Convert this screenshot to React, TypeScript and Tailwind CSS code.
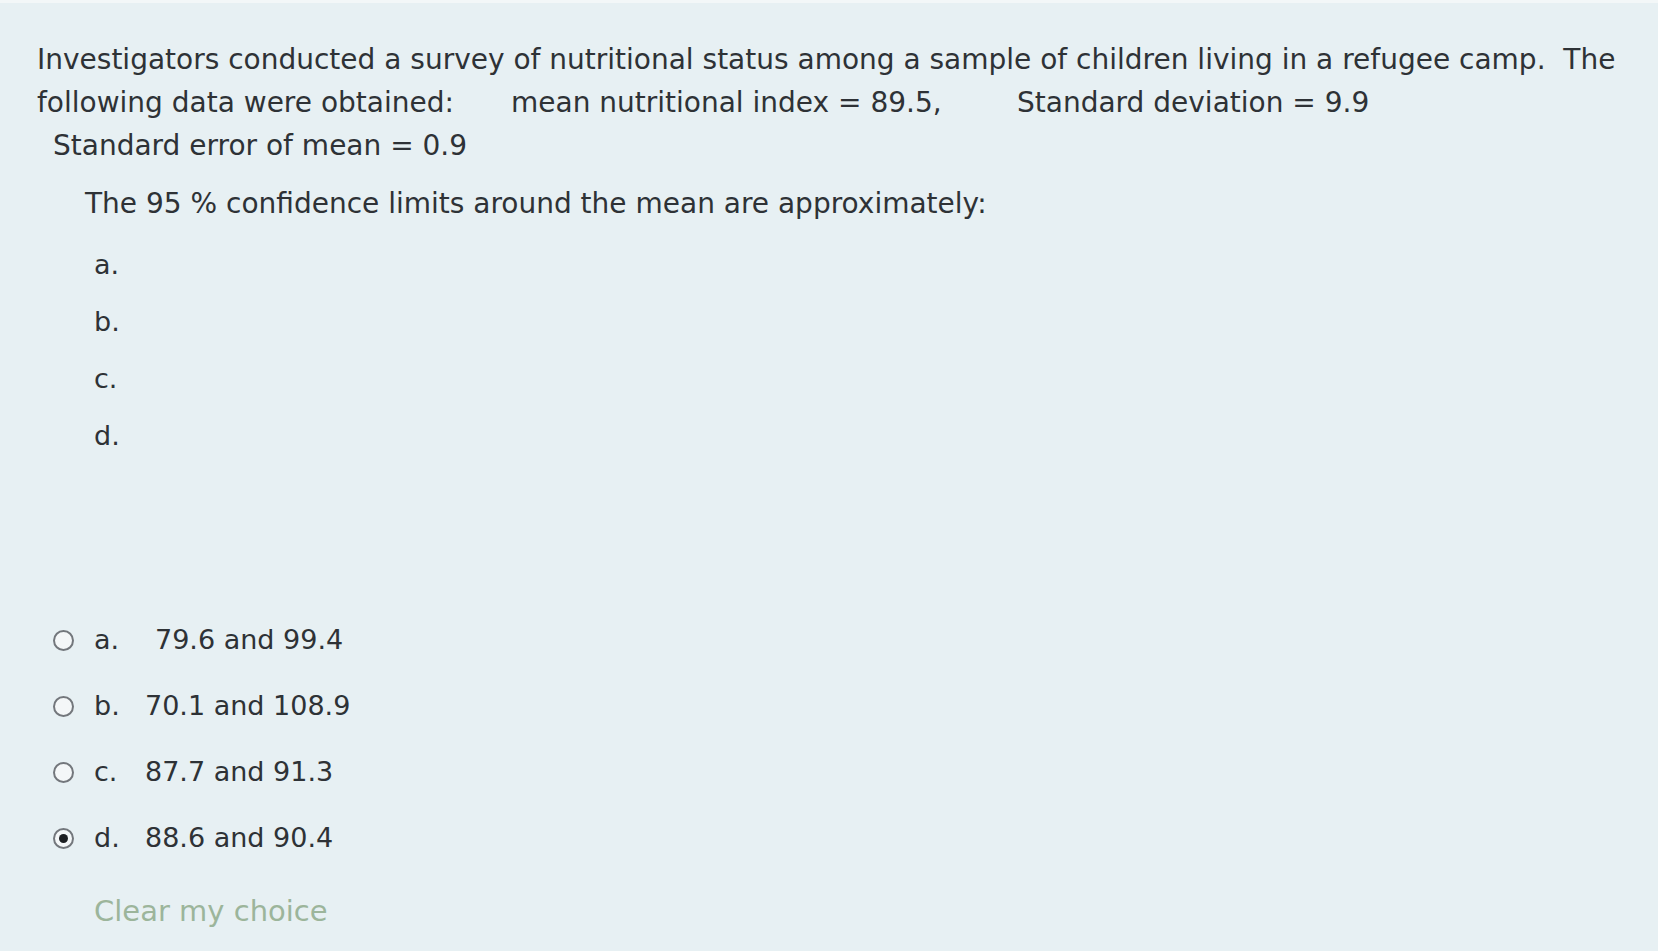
import React from 'react';

const options = [
  { letter: 'a.', text: '79.6 and 99.4', gap: 'ml-[31px]' },
  { letter: 'b.', text: '70.1 and 108.9', gap: 'ml-[21px]' },
  { letter: 'c.', text: '87.7 and 91.3', gap: 'ml-[21px]' },
  { letter: 'd.', text: '88.6 and 90.4', gap: 'ml-[21px]' },
];

const Radio = ({ checked }: { checked?: boolean }) => (
  <span className="flex h-[21px] w-[21px] items-center justify-center rounded-full border-2 border-[#73777c] bg-[#f4f7f8]">
    {checked && <span className="h-[9px] w-[9px] rounded-full bg-[#1c1f22]" />}
  </span>
);

const App: React.FC = () => {
  return (
    <div className="h-[951px] w-[1658px] overflow-hidden bg-[#e7f0f3] font-['DejaVu_Sans',sans-serif] text-[28px] text-[#2e3236] border-t-[3px] border-t-[#f3f7f8]">
      <div className="pl-[37px] pt-[35px]">
        {/* question stem */}
        <div className="leading-[43px] whitespace-pre">
          <div>Investigators conducted a survey of nutritional status among a sample of children living in a refugee camp.  The</div>
          <div className="flex">
            <span className="w-[474px]">following data were obtained:</span>
            <span className="w-[506px]">mean nutritional index = 89.5,</span>
            <span>Standard deviation = 9.9</span>
          </div>
          <div className="pl-[16px]">Standard error of mean = 0.9</div>
        </div>

        <div className="mt-[15px] pl-[48px] leading-[43px]">
          The 95 % confidence limits around the mean are approximately:
        </div>

        <div className="mt-[11px] pl-[57px] text-[27px]">
          {['a.', 'b.', 'c.', 'd.'].map((l) => (
            <div key={l} className="h-[57px] leading-[57px]">{l}</div>
          ))}
        </div>

        {/* answers */}
        <div className="mt-[143px] pl-[16px] text-[27px]">
          {options.map((o) => (
            <div key={o.letter} className="flex h-[66px] items-center">
              <Radio checked={o.letter === 'd.'} />
              <span className="ml-[20px] w-[30px]">{o.letter}</span>
              <span className={o.gap}>{o.text}</span>
            </div>
          ))}
        </div>

        <div className="mt-[19px] pl-[57px] leading-[43px] text-[29px] text-[#9cb59b]">Clear my choice</div>
      </div>
    </div>
  );
};

export default App;
